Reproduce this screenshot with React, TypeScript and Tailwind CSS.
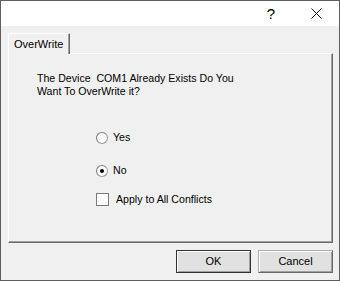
import React from "react";

const Radio = ({ checked, label }: { checked?: boolean; label: string }) => (
  <div className="flex items-center h-[13px]">
    <div className="w-[12px] h-[12px] rounded-full border border-[#9a9a9a] border-t-[#7a7a7a] border-l-[#7a7a7a] bg-white flex items-center justify-center">
      {checked && <div className="w-[4px] h-[4px] rounded-full bg-black" />}
    </div>
    <span className="ml-[5px]">{label}</span>
  </div>
);

export default function App() {
  return (
    <div className="w-[340px] h-[281px] bg-[#f0f0f0] border border-[#5e5e5e] flex flex-col font-['Liberation_Sans',Arial,sans-serif] text-[10.6px] leading-[13px] text-black">
      {/* title bar */}
      <div className="h-[25px] bg-white flex items-center justify-end shrink-0">
        <span className="text-[15px] leading-[14px] mr-[36px] mt-[1px]">?</span>
        <svg width="11" height="11" viewBox="0 0 11 11" className="mr-[17px]">
          <path d="M0.5 0.5 L10.5 10.5 M10.5 0.5 L0.5 10.5" stroke="#111" strokeWidth="1" />
        </svg>
      </div>

      <div className="pl-[7px] pr-[6px] pt-[7px]">
        {/* tab strip */}
        <div className="h-[20px] flex">
          <div className="relative z-10 w-[62px] h-[21px] bg-[#f0f0f0] border-t border-l border-white border-r border-r-[#696969] shadow-[inset_-1px_0_0_#a0a0a0] pl-[5px] pt-[4px] text-[11px]">
            OverWrite
          </div>
        </div>

        {/* panel */}
        <div className="h-[190px] border-t border-l border-white border-r border-b border-r-[#696969] border-b-[#696969] shadow-[inset_-1px_-1px_0_#a0a0a0] pl-[28px] pt-[18px]">
          <p>The Device&nbsp; COM1 Already Exists Do You</p>
          <p>Want To OverWrite it?</p>
          <div className="ml-[59px] mt-[33px] flex flex-col">
            <Radio label="Yes" />
            <div className="h-[20px]" />
            <Radio checked label="No" />
            <div className="h-[16px]" />
            <div className="flex items-center h-[13px]">
              <div className="w-[13px] h-[13px] border border-[#7a7a7a] bg-white" />
              <span className="ml-[7px]">Apply to All Conflicts</span>
            </div>
          </div>
        </div>
      </div>

      {/* buttons */}
      <div className="flex justify-end gap-[7px] mt-[7px] pr-[6px]">
        <button className="w-[75px] h-[23px] bg-[#e1e1e1] border border-[#333333] shadow-[inset_1px_1px_0_#ffffff,inset_-1px_-1px_0_#a0a0a0] text-[11px]">
          OK
        </button>
        <button className="w-[75px] h-[23px] bg-[#e1e1e1] border border-[#adadad] border-r-[#696969] border-b-[#696969] shadow-[inset_1px_1px_0_#ffffff,inset_-1px_-1px_0_#a0a0a0] text-[11px]">
          Cancel
        </button>
      </div>
    </div>
  );
}
